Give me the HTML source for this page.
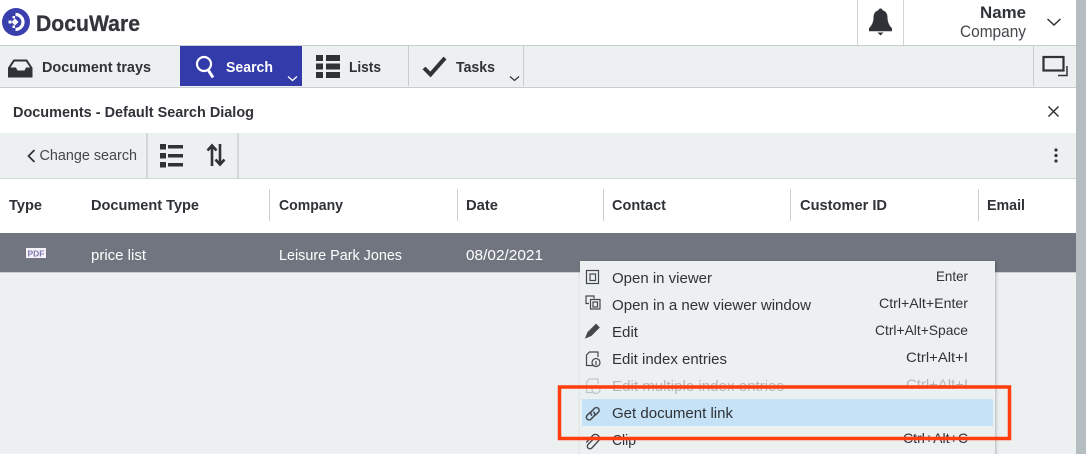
<!DOCTYPE html>
<html><head><meta charset="utf-8"><style>
html,body{margin:0;padding:0;background:#fff;width:1086px;height:454px;overflow:hidden}
svg{display:block}
text{font-family:"Liberation Sans",sans-serif;fill:#2f3237;font-size:15px}
.b{font-weight:700}
.s{font-size:14px}
.f{fill:#b4b7ba}
</style></head><body>
<svg width="1086" height="454" viewBox="0 0 1086 454" xmlns="http://www.w3.org/2000/svg">
<defs><filter id="sh" x="-5%" y="-5%" width="110%" height="110%"><feDropShadow dx="1" dy="1" stdDeviation="1.500" flood-color="#000" flood-opacity=".25"/></filter></defs>
<rect width="1086" height="454" fill="#fff"/>
<!-- nav -->
<rect x="0" y="45" width="1076" height="43" fill="#ecf0f1"/>
<rect x="0" y="45" width="1076" height="1" fill="#c9cdcf"/>
<rect x="0" y="87" width="1076" height="1" fill="#c9cdcf"/>
<rect x="180" y="46" width="122" height="40" fill="#333bab"/>
<rect x="408" y="46" width="1" height="40" fill="#c9cdcf"/>
<rect x="523" y="46" width="1" height="40" fill="#c9cdcf"/>
<rect x="1033" y="46" width="1" height="40" fill="#c9cdcf"/>
<rect x="857" y="0" width="1" height="45" fill="#d2d5d7"/>
<rect x="903" y="0" width="1" height="45" fill="#d2d5d7"/>
<!-- toolbar -->
<rect x="0" y="133" width="1076" height="46" fill="#ecf0f1"/>
<rect x="0" y="178" width="1076" height="1" fill="#d3d7da"/>
<rect x="146" y="133" width="2" height="45" fill="#d3d7da"/>
<rect x="237" y="133" width="2" height="45" fill="#d3d7da"/>
<!-- col separators -->
<rect x="269" y="189" width="1" height="32" fill="#ccd0d2"/>
<rect x="457" y="189" width="1" height="32" fill="#ccd0d2"/>
<rect x="603" y="189" width="1" height="32" fill="#ccd0d2"/>
<rect x="790" y="189" width="1" height="32" fill="#ccd0d2"/>
<rect x="978" y="189" width="1" height="32" fill="#ccd0d2"/>
<!-- row & lower -->
<rect x="0" y="233" width="1076" height="39" fill="#70757f"/>
<rect x="0" y="272" width="1076" height="182" fill="#ecf0f1"/>
<rect x="0" y="272" width="1076" height="1" fill="#c9cdd0"/>
<!-- scrollbar -->
<rect x="1076" y="0" width="10" height="454" fill="#b5bdc0"/>

<!-- logo -->
<circle cx="16" cy="22" r="14" fill="#3a3fae"/>
<path d="M15.500 14.500a7.500 7.500 0 0 1 0 15" fill="none" stroke="#fff" stroke-width="3.200"/>
<path d="M15 18.500l3.500 3.500-3.500 3.500-3.500-3.500z" fill="#fff"/>
<path d="M8.500 20.500h3v3h-3zM12.500 16h2.500v2.500h-2.500zM12.500 25.500h2.500v2.500h-2.500z" fill="#fff"/>
<text x="36" y="31" class="b" style="font-size:22.500px;fill:#33353a" textLength="104" lengthAdjust="spacingAndGlyphs" stroke="#33353a" stroke-width=".3">DocuWare</text>

<!-- tray -->
<path d="M14 60.500h12.500l5 7.500v8.500H9V68z" fill="none" stroke="#2f3237" stroke-width="2"/>
<path d="M9 67.500h7l1.500 3h7l1.500-3h6v9.500H9z" fill="#2f3237"/>
<text x="42" y="72" class="b" textLength="109" lengthAdjust="spacingAndGlyphs">Document trays</text>
<!-- search -->
<circle cx="204" cy="64" r="7" fill="none" stroke="#fff" stroke-width="2.200"/>
<path d="M208.500 70.500l4.500 7" stroke="#fff" stroke-width="3" fill="none"/>
<text x="226" y="72" class="b" style="fill:#fff" textLength="47" lengthAdjust="spacingAndGlyphs">Search</text>
<path d="M288 76.500l4.500 4 4.500-4" fill="none" stroke="#fff" stroke-width="1.300"/>
<!-- lists -->
<path d="M316 55h7v6h-7zM326 55h14v6h-14zM316 63.500h7v6h-7zM326 63.500h14v6h-14zM316 72h7v6h-7zM326 72h14v6h-14z" fill="#2f3237"/>
<text x="349" y="72" class="b" textLength="32" lengthAdjust="spacingAndGlyphs">Lists</text>
<!-- tasks -->
<path d="M424 68l6.500 6.500L445 58" fill="none" stroke="#2f3237" stroke-width="4"/>
<text x="456" y="72" class="b" textLength="39" lengthAdjust="spacingAndGlyphs">Tasks</text>
<path d="M510 76.500l4.500 4 4.500-4" fill="none" stroke="#2f3237" stroke-width="1.200"/>
<!-- bell -->
<path d="M880.500 8.500c1.500 0 2 1 2 1.800 3.800 1 5 4 5 7.500 0 4 1.500 7.500 4.500 10.500v3h-23v-3c3-3 4.500-6.500 4.500-10.500 0-3.500 1.200-6.500 5-7.500 0-.8.500-1.800 2-1.800z" fill="#2f3237"/>
<path d="M877.500 32.500h6l-3 3z" fill="#2f3237"/>
<text x="980" y="18" class="b" style="font-size:16.500px" textLength="46" lengthAdjust="spacingAndGlyphs">Name</text>
<text x="960" y="37" style="font-size:16.500px;fill:#44474c" textLength="66" lengthAdjust="spacingAndGlyphs">Company</text>
<path d="M1047.500 19l6.500 6 6.500-6" fill="none" stroke="#2f3237" stroke-width="1.500"/>
<!-- window -->
<rect x="1043.500" y="57" width="20" height="13.500" fill="none" stroke="#2f3237" stroke-width="2.200"/>
<path d="M1067 66v9.500h-9" fill="none" stroke="#2f3237" stroke-width="1.500"/>

<!-- title -->
<text x="13" y="117" class="b" textLength="241" lengthAdjust="spacingAndGlyphs">Documents - Default Search Dialog</text>
<path d="M1048.500 106.500l10 10M1058.500 106.500l-10 10" stroke="#2f3237" stroke-width="1.500" fill="none"/>

<!-- toolbar icons -->
<path d="M34.500 150l-6 6 6 6" fill="none" stroke="#2f3237" stroke-width="1.700"/>
<text x="39.500" y="160" style="fill:#44474c" textLength="97.500" lengthAdjust="spacingAndGlyphs">Change search</text>
<path d="M160 144h6v5.500h-6zM168 145h15v3.500h-15zM160 153h6v5.500h-6zM168 154h15v3.500h-15zM160 162h6v5.500h-6zM168 163h15v3.500h-15z" fill="#2f3237"/>
<path d="M212 166v-20M207.500 150.500l4.500-5 4.500 5M220 144v20M215.500 159.500l4.500 5 4.500-5" fill="none" stroke="#2f3237" stroke-width="2.600"/>
<circle cx="1056" cy="150" r="1.600" fill="#2f3237"/><circle cx="1056" cy="155.500" r="1.600" fill="#2f3237"/><circle cx="1056" cy="161" r="1.600" fill="#2f3237"/>

<!-- headers -->
<text x="9" y="210" class="b" textLength="33" lengthAdjust="spacingAndGlyphs">Type</text>
<text x="91" y="210" class="b" textLength="108" lengthAdjust="spacingAndGlyphs">Document Type</text>
<text x="279" y="210" class="b" textLength="64" lengthAdjust="spacingAndGlyphs">Company</text>
<text x="466" y="210" class="b" textLength="32" lengthAdjust="spacingAndGlyphs">Date</text>
<text x="612" y="210" class="b" textLength="54" lengthAdjust="spacingAndGlyphs">Contact</text>
<text x="800" y="210" class="b" textLength="87" lengthAdjust="spacingAndGlyphs">Customer ID</text>
<text x="987" y="210" class="b" textLength="38" lengthAdjust="spacingAndGlyphs">Email</text>

<!-- row -->
<rect x="26" y="248" width="20" height="10" fill="#f4f2f6"/>
<text x="27.500" y="256.500" style="font-size:8.500px;fill:#7f7ab0" class="b" textLength="17" lengthAdjust="spacingAndGlyphs">PDF</text>
<text x="91" y="260" style="fill:#fff" textLength="55" lengthAdjust="spacingAndGlyphs">price list</text>
<text x="279" y="260" style="fill:#fff" textLength="123" lengthAdjust="spacingAndGlyphs">Leisure Park Jones</text>
<text x="466" y="260" style="fill:#fff" textLength="77" lengthAdjust="spacingAndGlyphs">08/02/2021</text>

<!-- menu -->
<rect x="580" y="261" width="415" height="200" fill="#ecf0f1" filter="url(#sh)"/>
<rect x="582" y="399" width="411" height="27" fill="#c5e2f7"/>
<text x="612" y="283" textLength="100" lengthAdjust="spacingAndGlyphs">Open in viewer</text>
<text x="612" y="310" textLength="199" lengthAdjust="spacingAndGlyphs">Open in a new viewer window</text>
<text x="612" y="337" textLength="26" lengthAdjust="spacingAndGlyphs">Edit</text>
<text x="612" y="364" textLength="115" lengthAdjust="spacingAndGlyphs">Edit index entries</text>
<text x="612" y="391" class="f" textLength="172" lengthAdjust="spacingAndGlyphs">Edit multiple index entries</text>
<text x="612" y="418" textLength="121" lengthAdjust="spacingAndGlyphs">Get document link</text>
<text x="612" y="445" textLength="24" lengthAdjust="spacingAndGlyphs">Clip</text>
<text x="936" y="281" class="s" textLength="32" lengthAdjust="spacingAndGlyphs">Enter</text>
<text x="879" y="308" class="s" textLength="89" lengthAdjust="spacingAndGlyphs">Ctrl+Alt+Enter</text>
<text x="875" y="335" class="s" textLength="93" lengthAdjust="spacingAndGlyphs">Ctrl+Alt+Space</text>
<text x="906" y="362" class="s" textLength="62" lengthAdjust="spacingAndGlyphs">Ctrl+Alt+I</text>
<text x="906" y="389" class="s f" textLength="62" lengthAdjust="spacingAndGlyphs">Ctrl+Alt+I</text>
<text x="903" y="443" class="s" textLength="65" lengthAdjust="spacingAndGlyphs">Ctrl+Alt+C</text>

<!-- menu icons -->
<g fill="none" stroke="#44474c" stroke-width="1.200">
<rect x="586.500" y="270.500" width="12" height="13"/><rect x="590" y="274" width="5.500" height="6.500"/>
<path d="M589 303.500h-3v-7.500h8v2.500"/><rect x="590.500" y="299.500" width="9.500" height="9.500"/><rect x="593" y="302" width="4.500" height="5"/>
<path d="M586 337.500l2-5 8-8 3 3-8 8z" fill="#44474c" stroke-width="1.200"/>
<path d="M594 365.500h-7.500V355l3-3h8.500v5"/><circle cx="596" cy="362.500" r="4"/><path d="M596 361v4"/>
<g stroke="#c2c5c8"><path d="M594 392.500h-7.500V382l3-3h8.500v5"/><circle cx="596" cy="389.500" r="4"/></g>
<g stroke-width="1.500"><path d="M590.500 412l-3.500 3.500a2.700 2.700 0 0 0 3.800 3.800l3.500-3.500a2.700 2.700 0 0 0-1-3.900"/><path d="M595 415.500l3.500-3.500a2.700 2.700 0 0 0-3.800-3.800l-3.500 3.500a2.700 2.700 0 0 0 1 3.900"/></g>
<path d="M595.500 437l-7.500 7.500a2.500 2.500 0 0 0 3.800 3.500l7-7.500a4 4 0 0 0-5.500-5.500l-7 7.500" stroke-width="1.400"/>
</g>

<!-- red rectangle -->
<rect x="559.500" y="387" width="450" height="51.500" fill="none" stroke="#ff3d0d" stroke-width="3.500"/>
</svg>
</body></html>
